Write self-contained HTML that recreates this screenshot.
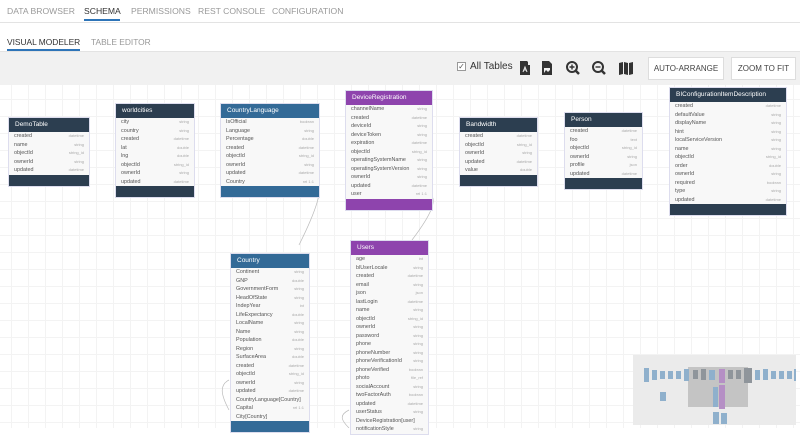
<!DOCTYPE html>
<html><head><meta charset="utf-8"><style>
*{margin:0;padding:0;box-sizing:border-box}
body{width:800px;height:428px;overflow:hidden;background:#fff;font-family:"Liberation Sans",sans-serif;position:relative}
.nav{position:absolute;left:0;top:0;width:800px;height:23px;border-bottom:1px solid #e3e3e3}
.nav span{position:absolute;top:6px;font-size:8.6px;color:#999}
.sub{position:absolute;left:0;top:23px;width:800px;height:29px;border-bottom:1px solid #e3e3e3}
.sub span{position:absolute;top:14px;font-size:8.4px;color:#999}
.tool{position:absolute;left:0;top:52px;width:800px;height:33px;background:#f1f1f1}
.canvas{position:absolute;left:0;top:85px;width:800px;height:343px;background-color:#fff;
background-image:linear-gradient(#f3f3f3 1px,transparent 1px),linear-gradient(90deg,#f3f3f3 1px,transparent 1px);background-size:17px 17px;background-position:-6px -3px}
.btn{position:absolute;top:57px;height:23px;background:#fff;border:1px solid #ddd;font-size:8px;color:#444;text-align:center;line-height:21px}
.t{position:absolute;background:#f8f8f8;border:1px solid #dde;font-size:5.4px;color:#555}
.t h{display:block;height:14px;line-height:14px;color:#fff;font-size:6.5px;padding-left:6px;background:#2c3e50}
.t .r{height:8.5px;line-height:8.5px;padding:0 5px 0 5px;position:relative;white-space:nowrap}
.t .r i{position:absolute;right:5px;font-style:normal;font-size:4px;color:#aaa}
.t .f{height:11px;background:#2c3e50}
.b h,.b .f{background:#336a97}
.p h,.p .f{background:#8e44ad}
.mm{position:absolute;left:633px;top:355px;width:163px;height:70px;background:#ebebeb}
.mm div{position:absolute;background:#8fb0cc}
</style></head><body>
<div class="nav">
<span style="left:7px">DATA BROWSER</span>
<span style="left:84px;color:#333">SCHEMA</span>
<span style="left:131px">PERMISSIONS</span>
<span style="left:198px">REST CONSOLE</span>
<span style="left:272px">CONFIGURATION</span>
<div style="position:absolute;left:84px;top:19px;width:36px;height:2px;background:#2d74b8"></div>
</div>
<div class="sub">
<span style="left:7px;color:#333">VISUAL MODELER</span>
<span style="left:91px">TABLE EDITOR</span>
<div style="position:absolute;left:7px;top:26px;width:73px;height:2px;background:#2d74b8"></div>
</div>
<div class="tool"></div>
<div class="canvas"></div>
<div style="position:absolute;left:457px;top:62px;width:9px;height:9px;border:1px solid #999;background:#fff;font-size:8px;line-height:7px;color:#555;text-align:center">✓</div>
<div style="position:absolute;left:470px;top:61px;font-size:10px;color:#333">All Tables</div>
<svg style="position:absolute;left:515px;top:58px" width="130" height="20" viewBox="0 0 130 20">
<g fill="#333">
<path d="M5 3h7l3 3v11H5z"/><path d="M13 3v4h3" fill="#f1f1f1"/>
<path d="M8 14l2-5 2 5M9 12h2" stroke="#f1f1f1" stroke-width="1" fill="none"/>
<path d="M27 3h7l3 3v11H27z"/>
<rect x="29" y="10" width="6" height="5" fill="#f1f1f1"/><path d="M29 15l2-3 2 2 2-2v3z"/>
<circle cx="57" cy="9" r="5" fill="none" stroke="#333" stroke-width="2"/><path d="M60 12l4 4" stroke="#333" stroke-width="2.5"/><path d="M54.5 9h5M57 6.5v5" stroke="#333" stroke-width="1.4"/>
<circle cx="83" cy="9" r="5" fill="none" stroke="#333" stroke-width="2"/><path d="M86 12l4 4" stroke="#333" stroke-width="2.5"/><path d="M80.5 9h5" stroke="#333" stroke-width="1.4"/>
<path d="M104 5l4-1v12l-4 1zM109 4l4 1v12l-4-1zM114 5l4-1v12l-4 1z"/>
</g></svg>
<div class="btn" style="left:648px;width:76px">AUTO-ARRANGE</div>
<div class="btn" style="left:731px;width:65px">ZOOM TO FIT</div>

<svg style="position:absolute;left:0;top:0" width="800" height="428"><g fill="none" stroke="#bbb" stroke-width="0.7">
<path d="M319 185c2 5 0 20-20 60"/><path d="M432 196c3 5 2 15-20 44"/><path d="M229 380c-10 5-8 15 0 30"/><path d="M349 410c-10 5-8 10 0 18"/></g></svg>

<div class="t" style="left:8px;top:117px;width:82px"><h>DemoTable</h>
<div class="r">created<i>datetime</i></div><div class="r">name<i>string</i></div><div class="r">objectId<i>string_id</i></div><div class="r">ownerId<i>string</i></div><div class="r">updated<i>datetime</i></div><div class="f"></div></div>

<div class="t" style="left:115px;top:103px;width:80px"><h>worldcities</h>
<div class="r">city<i>string</i></div><div class="r">country<i>string</i></div><div class="r">created<i>datetime</i></div><div class="r">lat<i>double</i></div><div class="r">lng<i>double</i></div><div class="r">objectId<i>string_id</i></div><div class="r">ownerId<i>string</i></div><div class="r">updated<i>datetime</i></div><div class="f"></div></div>

<div class="t b" style="left:220px;top:103px;width:100px"><h>CountryLanguage</h>
<div class="r">IsOfficial<i>boolean</i></div><div class="r">Language<i>string</i></div><div class="r">Percentage<i>double</i></div><div class="r">created<i>datetime</i></div><div class="r">objectId<i>string_id</i></div><div class="r">ownerId<i>string</i></div><div class="r">updated<i>datetime</i></div><div class="r">Country<i>rel 1:1</i></div><div class="f"></div></div>

<div class="t p" style="left:345px;top:90px;width:88px"><h>DeviceRegistration</h>
<div class="r">channelName<i>string</i></div><div class="r">created<i>datetime</i></div><div class="r">deviceId<i>string</i></div><div class="r">deviceToken<i>string</i></div><div class="r">expiration<i>datetime</i></div><div class="r">objectId<i>string_id</i></div><div class="r">operatingSystemName<i>string</i></div><div class="r">operatingSystemVersion<i>string</i></div><div class="r">ownerId<i>string</i></div><div class="r">updated<i>datetime</i></div><div class="r">user<i>rel 1:1</i></div><div class="f"></div></div>

<div class="t" style="left:459px;top:117px;width:79px"><h>Bandwidth</h>
<div class="r">created<i>datetime</i></div><div class="r">objectId<i>string_id</i></div><div class="r">ownerId<i>string</i></div><div class="r">updated<i>datetime</i></div><div class="r">value<i>double</i></div><div class="f"></div></div>

<div class="t" style="left:564px;top:112px;width:79px"><h>Person</h>
<div class="r">created<i>datetime</i></div><div class="r">foo<i>text</i></div><div class="r">objectId<i>string_id</i></div><div class="r">ownerId<i>string</i></div><div class="r">profile<i>json</i></div><div class="r">updated<i>datetime</i></div><div class="f"></div></div>

<div class="t" style="left:669px;top:87px;width:118px"><h>BIConfigurationItemDescription</h>
<div class="r">created<i>datetime</i></div><div class="r">defaultValue<i>string</i></div><div class="r">displayName<i>string</i></div><div class="r">hint<i>string</i></div><div class="r">localServiceVersion<i>string</i></div><div class="r">name<i>string</i></div><div class="r">objectId<i>string_id</i></div><div class="r">order<i>double</i></div><div class="r">ownerId<i>string</i></div><div class="r">required<i>boolean</i></div><div class="r">type<i>string</i></div><div class="r">updated<i>datetime</i></div><div class="f"></div></div>

<div class="t b" style="left:230px;top:253px;width:80px"><h>Country</h>
<div class="r">Continent<i>string</i></div><div class="r">GNP<i>double</i></div><div class="r">GovernmentForm<i>string</i></div><div class="r">HeadOfState<i>string</i></div><div class="r">IndepYear<i>int</i></div><div class="r">LifeExpectancy<i>double</i></div><div class="r">LocalName<i>string</i></div><div class="r">Name<i>string</i></div><div class="r">Population<i>double</i></div><div class="r">Region<i>string</i></div><div class="r">SurfaceArea<i>double</i></div><div class="r">created<i>datetime</i></div><div class="r">objectId<i>string_id</i></div><div class="r">ownerId<i>string</i></div><div class="r">updated<i>datetime</i></div><div class="r">CountryLanguage[Country]</div><div class="r">Capital<i>rel 1:1</i></div><div class="r">City[Country]</div><div class="f"></div></div>

<div class="t p" style="left:350px;top:240px;width:79px"><h>Users</h>
<div class="r">age<i>int</i></div><div class="r">blUserLocale<i>string</i></div><div class="r">created<i>datetime</i></div><div class="r">email<i>string</i></div><div class="r">json<i>json</i></div><div class="r">lastLogin<i>datetime</i></div><div class="r">name<i>string</i></div><div class="r">objectId<i>string_id</i></div><div class="r">ownerId<i>string</i></div><div class="r">password<i>string</i></div><div class="r">phone<i>string</i></div><div class="r">phoneNumber<i>string</i></div><div class="r">phoneVerificationId<i>string</i></div><div class="r">phoneVerified<i>boolean</i></div><div class="r">photo<i>file_ref</i></div><div class="r">socialAccount<i>string</i></div><div class="r">twoFactorAuth<i>boolean</i></div><div class="r">updated<i>datetime</i></div><div class="r">userStatus<i>string</i></div><div class="r">DeviceRegistration[user]</div><div class="r">notificationStyle<i>string</i></div></div>

<div class="mm">
<div style="left:55px;top:12px;width:60px;height:40px;background:#c4c4c4"></div>
<div style="left:11px;top:13px;width:5px;height:14px"></div>
<div style="left:19px;top:15px;width:5px;height:10px"></div>
<div style="left:27px;top:16px;width:5px;height:8px"></div>
<div style="left:35px;top:16px;width:5px;height:8px"></div>
<div style="left:43px;top:16px;width:5px;height:8px"></div>
<div style="left:51px;top:14px;width:5px;height:12px"></div>
<div style="left:60px;top:15px;width:5px;height:9px;background:#8f959b"></div>
<div style="left:68px;top:14px;width:5px;height:11px;background:#8f959b"></div>
<div style="left:76px;top:15px;width:6px;height:10px"></div>
<div style="left:86px;top:14px;width:6px;height:14px;background:#b58fc5"></div>
<div style="left:95px;top:15px;width:5px;height:9px;background:#8f959b"></div>
<div style="left:103px;top:15px;width:5px;height:9px;background:#8f959b"></div>
<div style="left:111px;top:13px;width:8px;height:15px;background:#8f959b"></div>
<div style="left:122px;top:15px;width:5px;height:10px"></div>
<div style="left:130px;top:14px;width:5px;height:11px"></div>
<div style="left:138px;top:16px;width:5px;height:8px"></div>
<div style="left:146px;top:16px;width:5px;height:8px"></div>
<div style="left:154px;top:16px;width:5px;height:8px"></div>
<div style="left:161px;top:14px;width:2px;height:12px"></div>
<div style="left:27px;top:37px;width:6px;height:9px"></div>
<div style="left:80px;top:32px;width:5px;height:20px"></div>
<div style="left:86px;top:30px;width:6px;height:24px;background:#b58fc5"></div>
<div style="left:80px;top:57px;width:6px;height:12px"></div>
<div style="left:88px;top:58px;width:6px;height:11px"></div>
</div>
</body></html>
